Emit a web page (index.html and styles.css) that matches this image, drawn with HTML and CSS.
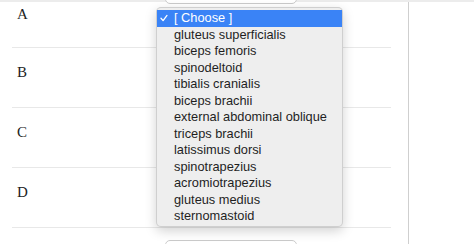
FILE: index.html
```html
<!DOCTYPE html>
<html lang="en">
<head>
<meta charset="utf-8">
<title>Muscle matching</title>
<link rel="stylesheet" href="styles.css">
</head>
<body>
<div class="topbar"></div>
<div class="layout">
  <main class="main">
    <div class="table">
      <div class="row first">
        <div class="label">A</div>
        <div class="select"></div>
      </div>
      <div class="row">
        <div class="label">B</div>
        <div class="select"></div>
      </div>
      <div class="row">
        <div class="label">C</div>
        <div class="select"></div>
      </div>
      <div class="row">
        <div class="label">D</div>
        <div class="select"></div>
      </div>
      <div class="row">
        <div class="label"></div>
        <div class="select"></div>
      </div>
    </div>
  </main>
  <aside class="side"></aside>
</div>
<ul class="menu">
  <li class="item active"><span class="mark"><svg viewBox="0 0 8 8" width="8" height="8"><path d="M1 4.3 L3.1 6.6 L7 1.4" fill="none" stroke="#fff" stroke-width="1.3" stroke-linecap="round" stroke-linejoin="round"/></svg></span>[ Choose ]</li>
  <li class="item"><span class="mark"></span>gluteus superficialis</li>
  <li class="item"><span class="mark"></span>biceps femoris</li>
  <li class="item"><span class="mark"></span>spinodeltoid</li>
  <li class="item"><span class="mark"></span>tibialis cranialis</li>
  <li class="item"><span class="mark"></span>biceps brachii</li>
  <li class="item"><span class="mark"></span>external abdominal oblique</li>
  <li class="item"><span class="mark"></span>triceps brachii</li>
  <li class="item"><span class="mark"></span>latissimus dorsi</li>
  <li class="item"><span class="mark"></span>spinotrapezius</li>
  <li class="item"><span class="mark"></span>acromiotrapezius</li>
  <li class="item"><span class="mark"></span>gluteus medius</li>
  <li class="item"><span class="mark"></span>sternomastoid</li>
</ul>
</body>
</html>
```
FILE: styles.css
```css
html, body {
  margin: 0;
  padding: 0;
  background: #ffffff;
  overflow: hidden;
  height: 100%;
}

.topbar {
  height: 2px;
  background: #ececec;
}

.layout {
  display: flex;
  height: calc(100% - 2px);
}

.main {
  width: 408px;
  border-right: 1px solid #cfcfcf;
  flex: none;
}

.side {
  flex: 1;
}

.table {
  margin-left: 12px;
  width: 379px;
}

.row {
  display: flex;
  align-items: flex-start;
  padding-top: 12px;
  box-sizing: border-box;
  height: 60px;
  border-bottom: 1px solid #e8e8e8;
}

.row.first {
  padding-top: 0;
  height: 46px;
}

.row.first .select {
  margin-top: -20px;
}

.label {
  width: 148px;
  min-height: 22px;
  padding-left: 5px;
  padding-top: 1px;
  font-family: "Liberation Serif", "Times New Roman", serif;
  font-size: 15px;
  line-height: 22px;
  color: #222222;
}

.select {
  width: 132px;
  height: 22px;
  box-sizing: border-box;
  background: #ffffff;
  border: 1px solid #cbcbcb;
  border-radius: 5px;
}

.menu {
  position: absolute;
  left: 156px;
  top: 7px;
  width: 187px;
  box-sizing: border-box;
  margin: 0;
  padding: 2px 0 1px;
  list-style: none;
  background: #eeeeee;
  border: 1px solid rgba(0, 0, 0, 0.13);
  border-radius: 5px;
  box-shadow: 0 4px 12px rgba(0, 0, 0, 0.18);
  font-family: "Liberation Sans", Arial, sans-serif;
  font-size: 12.8px;
  color: #1f1f1f;
}

.item {
  display: flex;
  align-items: center;
  height: 16.5px;
  line-height: 16.5px;
  white-space: nowrap;
}

.item.active {
  background: #3a83f6;
  color: #ffffff;
}

.mark {
  width: 17px;
  flex: none;
  display: flex;
  align-items: center;
  padding-left: 3px;
  box-sizing: border-box;
}
```
